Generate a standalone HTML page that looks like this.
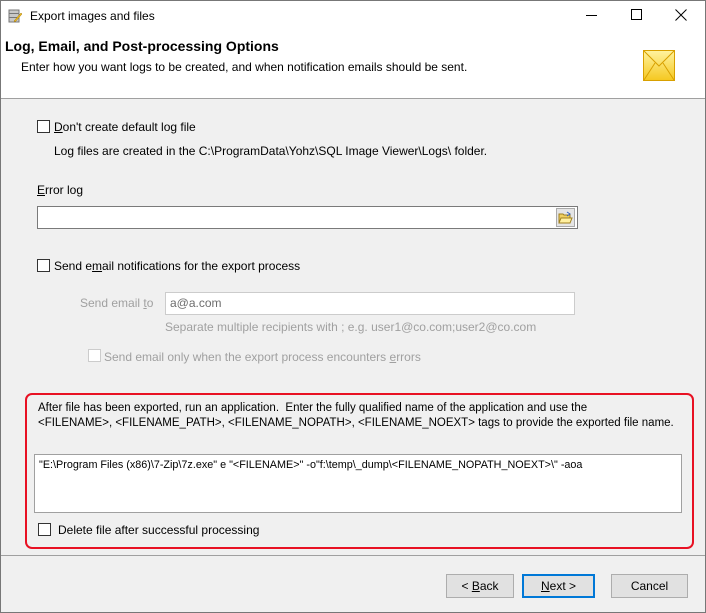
<!DOCTYPE html>
<html><head><style>
*{margin:0;padding:0;box-sizing:border-box}
body{width:706px;height:613px;background:#f0f0f0;font-family:"Liberation Sans",sans-serif;font-size:12px;color:#000;position:relative;overflow:hidden}
.a{position:absolute;white-space:nowrap;line-height:14px}
.cb{position:absolute;width:13px;height:13px;border:1px solid #333;background:#fff}
.btn{position:absolute;height:24px;border:1px solid #adadad;background:#e1e1e1;text-align:center;line-height:22px;font-size:12px}
u{text-decoration:underline}
</style></head><body>
<div style="position:absolute;left:0;top:0;width:706px;height:99px;background:#fff;border-bottom:1px solid #a0a0a0"></div>
<div style="position:absolute;left:0;top:0;width:706px;height:613px;border:1px solid #777;pointer-events:none;z-index:9"></div>
<svg class="a" style="left:8px;top:8px" width="14" height="16" viewBox="0 0 14 16"><rect x="1" y="2" width="10" height="12" fill="#c8c8c8" stroke="#777"/><rect x="1" y="5" width="10" height="1" fill="#777"/><rect x="1" y="9" width="10" height="1" fill="#777"/><path d="M6 13 L13 5 L14 6 L7 14Z" fill="#f0c020" stroke="#a07000" stroke-width=".5"/></svg>
<div class="a" style="left:30px;top:9px;font-size:12px">Export images and files</div>
<div class="a" style="left:586px;top:15px;width:11px;height:1px;background:#000"></div>
<div class="a" style="left:631px;top:9px;width:11px;height:11px;border:1px solid #000"></div>
<svg class="a" style="left:675px;top:9px" width="12" height="12"><path d="M0.5 0.5L11.5 11.5M11.5 0.5L0.5 11.5" stroke="#000"/></svg>
<div class="a" style="left:5px;top:38px;font-size:14px;font-weight:bold;line-height:16px">Log, Email, and Post-processing Options</div>
<div class="a" style="left:21px;top:60px">Enter how you want logs to be created, and when notification emails should be sent.</div>
<svg class="a" style="left:643px;top:50px" width="32" height="31" viewBox="0 0 32 31"><defs><linearGradient id="g" x1="0" y1="0" x2="0" y2="1"><stop offset="0" stop-color="#fff3a0"/><stop offset="1" stop-color="#f5c820"/></linearGradient></defs><rect x=".5" y=".5" width="31" height="30" fill="url(#g)" stroke="#d8a000"/><path d="M1 1L16 16L31 1M1 30L12 13M31 30L20 13" stroke="#d8a000" fill="none"/></svg>

<div class="cb" style="left:37px;top:120px"></div>
<div class="a" style="left:54px;top:120px"><u>D</u>on't create default log file</div>
<div class="a" style="left:54px;top:144px">Log files are created in the C:\ProgramData\Yohz\SQL Image Viewer\Logs\ folder.</div>
<div class="a" style="left:37px;top:183px"><u>E</u>rror log</div>
<div class="a" style="left:37px;top:206px;width:541px;height:23px;background:#fff;border:1px solid #7a7a7a"></div>
<div class="a" style="left:556px;top:208px;width:19px;height:19px;background:#e5e5e5;border:1px solid #aaa"></div>
<svg class="a" style="left:558px;top:210px" width="15" height="15"><path d="M1 4h4l1 1h6v8H1z" fill="#f0d060" stroke="#a08020"/><path d="M3 8h11l-2 5H1z" fill="#fff0a0" stroke="#a08020"/><path d="M9 2l3 2-3 2" stroke="#3060c0" fill="none"/></svg>
<div class="cb" style="left:37px;top:259px"></div>
<div class="a" style="left:54px;top:259px">Send e<u>m</u>ail notifications for the export process</div>
<div class="a" style="left:80px;top:296px;color:#a0a0a0">Send email <u>t</u>o</div>
<div class="a" style="left:165px;top:292px;width:410px;height:23px;background:#fff;border:1px solid #ccc"></div>
<div class="a" style="left:170px;top:296px;color:#6d6d6d">a@a.com</div>
<div class="a" style="left:165px;top:320px;color:#a0a0a0">Separate multiple recipients with ; e.g. user1@co.com;user2@co.com</div>
<div class="cb" style="left:88px;top:349px;border-color:#ccc"></div>
<div class="a" style="left:104px;top:350px;color:#a0a0a0">Send email only when the export process encounters <u>e</u>rrors</div>

<div class="a" style="left:25px;top:393px;width:669px;height:156px;border:2px solid #e81123;border-radius:7px"></div>
<div class="a" style="left:38px;top:401px;font-size:11.5px">After file has been exported, run an application.&nbsp; Enter the fully qualified name of the application and use the</div>
<div class="a" style="left:38px;top:416px;font-size:11.5px">&lt;FILENAME&gt;, &lt;FILENAME_PATH&gt;, &lt;FILENAME_NOPATH&gt;, &lt;FILENAME_NOEXT&gt; tags to provide the exported file name.</div>
<div class="a" style="left:34px;top:454px;width:648px;height:59px;background:#fff;border:1px solid #a0a0a0"></div>
<div class="a" style="left:39px;top:458px;font-size:10.8px">"E:\Program Files (x86)\7-Zip\7z.exe" e "&lt;FILENAME&gt;" -o"f:\temp\_dump\&lt;FILENAME_NOPATH_NOEXT&gt;\" -aoa</div>
<div class="cb" style="left:38px;top:523px"></div>
<div class="a" style="left:58px;top:523px">Delete file after successful processing</div>

<div class="a" style="left:0;top:555px;width:706px;height:1px;background:#a0a0a0"></div>
<div class="btn" style="left:446px;top:574px;width:68px">&lt; <u>B</u>ack</div>
<div class="btn" style="left:522px;top:574px;width:73px;border:2px solid #0078d7;line-height:20px"><u>N</u>ext &gt;</div>
<div class="btn" style="left:611px;top:574px;width:77px">Cancel</div>
</body></html>
